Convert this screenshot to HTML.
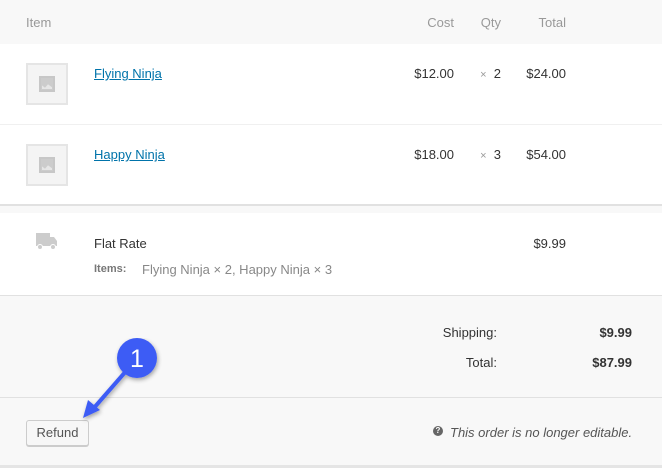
<!DOCTYPE html>
<html><head><meta charset="utf-8"><style>
*{margin:0;padding:0;box-sizing:border-box}
body{width:662px;height:468px;overflow:hidden;background:#f8f8f8;font-family:"Liberation Sans",sans-serif;font-size:13px;color:#333;position:relative}
.a{position:absolute;white-space:nowrap;line-height:16px}
.r{text-align:right}
.band{position:absolute;left:0;width:662px}
.thumb{position:absolute;width:42px;height:42px;border:2px solid #e5e5e5;background:#f4f4f4}
.thumb i{position:absolute;left:11px;top:11px;width:16px;height:16px;background:#ccc;border:2px solid #c7c7c7}
.thumb i:after{content:"";position:absolute;left:1px;bottom:1px;width:10px;height:6px;background:#e6e6e6;clip-path:polygon(0 100%,0 40%,30% 80%,60% 20%,100% 70%,100% 100%)}
a{color:#0073aa;text-decoration:underline}
</style></head><body>
<div class="band" style="top:0;height:44px;background:#f8f8f8"></div>
<div class="a" style="left:26px;top:15px;color:#999">Item</div>
<div class="a r" style="left:400px;width:54px;top:15px;color:#999">Cost</div>
<div class="a r" style="left:470px;width:31px;top:15px;color:#999">Qty</div>
<div class="a r" style="left:510px;width:56px;top:15px;color:#999">Total</div>

<div class="band" style="top:44px;height:162px;background:#fff;border-bottom:2px solid #e1e1e1"></div>
<div class="band" style="top:124px;height:1px;background:#f0f0f0"></div>
<div class="thumb" style="left:26px;top:63px"><i></i></div>
<div class="a" style="left:94px;top:66px"><a>Flying Ninja</a></div>
<div class="a r" style="left:400px;width:54px;top:66px">$12.00</div>
<div class="a r" style="left:470px;width:31px;top:66px"><span style="color:#999;font-size:11px">×</span>&nbsp; 2</div>
<div class="a r" style="left:510px;width:56px;top:66px">$24.00</div>
<div class="thumb" style="left:26px;top:144px"><i></i></div>
<div class="a" style="left:94px;top:147px"><a>Happy Ninja</a></div>
<div class="a r" style="left:400px;width:54px;top:147px">$18.00</div>
<div class="a r" style="left:470px;width:31px;top:147px"><span style="color:#999;font-size:11px">×</span>&nbsp; 3</div>
<div class="a r" style="left:510px;width:56px;top:147px">$54.00</div>

<div class="band" style="top:213px;height:83px;background:#fff;border-bottom:1px solid #e1e1e1"></div>
<svg class="a" style="left:36px;top:233px" width="22" height="18" viewBox="0 0 22 18"><rect x="0" y="0" width="14" height="13" fill="#ccc"/><path d="M14 4h4l3 4v5h-7z" fill="#ccc"/><circle cx="4" cy="14" r="2.5" fill="#ccc" stroke="#fff"/><circle cx="17" cy="14" r="2.5" fill="#ccc" stroke="#fff"/></svg>
<div class="a" style="left:94px;top:236px">Flat Rate</div>
<div class="a" style="left:94px;top:261px;font-size:11px;font-weight:bold;color:#777">Items:</div>
<div class="a" style="left:142px;top:262px;color:#888">Flying Ninja × 2, Happy Ninja × 3</div>
<div class="a r" style="left:510px;width:56px;top:236px">$9.99</div>

<div class="a r" style="left:400px;width:97px;top:325px">Shipping:</div>
<div class="a r" style="left:550px;width:82px;top:325px;font-weight:bold">$9.99</div>
<div class="a r" style="left:400px;width:97px;top:355px">Total:</div>
<div class="a r" style="left:550px;width:82px;top:355px;font-weight:bold">$87.99</div>

<div class="band" style="top:397px;height:1px;background:#e1e1e1"></div>
<div class="a" style="left:26px;top:420px;width:63px;height:26px;border:1px solid #ccc;border-radius:3px;background:#f7f7f7;box-shadow:0 1px 0 #ccc;text-align:center;line-height:24px;color:#555">Refund</div>
<div class="a" style="left:433px;top:426px;width:10px;height:10px;border-radius:50%;background:#666;color:#fff;font-size:8px;line-height:10px;text-align:center;font-weight:bold">?</div>
<div class="a" style="left:450px;top:425px;font-style:italic;color:#555">This order is no longer editable.</div>
<div class="band" style="top:465px;height:3px;background:#e5e5e5"></div>

<svg class="a" style="left:78px;top:338px" width="90" height="90" viewBox="0 0 90 90">
<defs><filter id="s"><feDropShadow dx="1" dy="2" stdDeviation="2" flood-opacity="0.35"/></filter></defs>
<g filter="url(#s)">
<line x1="49" y1="32" x2="15" y2="71" stroke="#3d5cf5" stroke-width="4"/>
<polygon points="5,80 10,62 22,72" fill="#3d5cf5"/>
<circle cx="59" cy="20" r="20" fill="#3d5cf5"/>
</g>
<text x="59" y="29" text-anchor="middle" font-family="Liberation Sans" font-size="25" fill="#fff">1</text>
</svg>
</body></html>
